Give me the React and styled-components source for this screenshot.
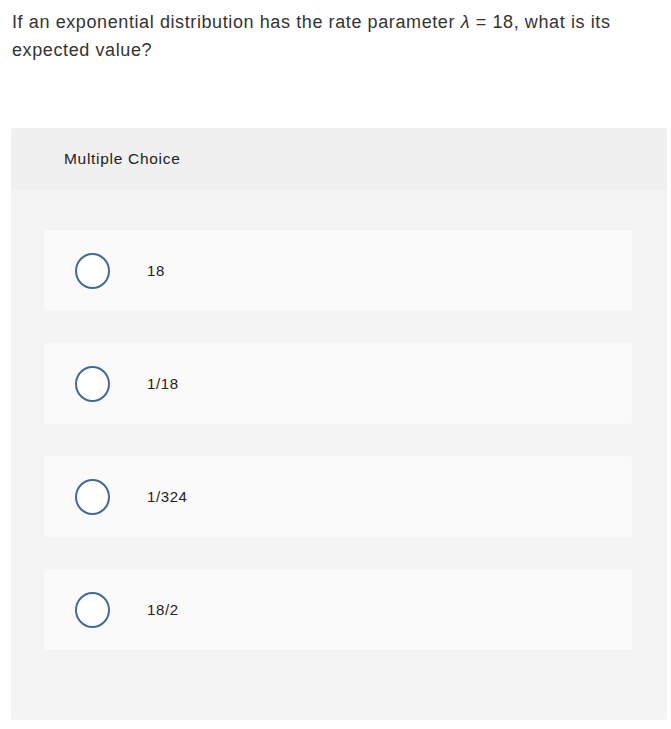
import React from "react"
import styled, { createGlobalStyle } from "styled-components"

const GlobalStyle = createGlobalStyle`
  body {
    margin: 0;
    background: #fff;
    font-family: "Liberation Sans", Arial, sans-serif;
    color: #333;
  }
`

const Page = styled.div`
  width: 671px;
  padding: 8px 4px 10px 11px;
  box-sizing: border-box;
`

const Question = styled.div`
  font-size: 18px;
  line-height: 28px;
  letter-spacing: 0.6px;
  color: #333;
  padding-left: 1px;
  max-width: 620px;
  margin-bottom: 64px;
`

const Lambda = styled.span`
  font-style: italic;
`

const Panel = styled.div`
  background: #f4f4f4;
  border-radius: 3px;
  overflow: hidden;
`

const PanelHeader = styled.div`
  background: #f0f0f0;
  height: 62px;
  display: flex;
  align-items: center;
  padding-left: 53px;
  font-size: 15.5px;
  letter-spacing: 0.7px;
  color: #222;
`

const ChoiceList = styled.div`
  display: flex;
  flex-direction: column;
  gap: 32px;
  padding: 40px 35px 70px 33px;
`

const Choice = styled.label`
  background: #fafafa;
  border-radius: 4px;
  height: 81px;
  display: flex;
  align-items: center;
  padding-left: 31px;
  font-size: 15px;
  letter-spacing: 0.6px;
  color: #222;
`

const Radio = styled.span`
  width: 31px;
  height: 32px;
  border: 2px solid #3f6b96;
  border-radius: 50%;
  background: #fff;
  margin-right: 37px;
  flex-shrink: 0;
`

const choices = ["18", "1/18", "1/324", "18/2"]

export default function App() {
  return (
    <Page>
      <GlobalStyle />
      <Question>
        If an exponential distribution has the rate parameter <Lambda>λ</Lambda> = 18, what is its expected value?
      </Question>
      <Panel>
        <PanelHeader>Multiple Choice</PanelHeader>
        <ChoiceList>
          {choices.map(c => (
            <Choice key={c}>
              <Radio />
              {c}
            </Choice>
          ))}
        </ChoiceList>
      </Panel>
    </Page>
  )
}
